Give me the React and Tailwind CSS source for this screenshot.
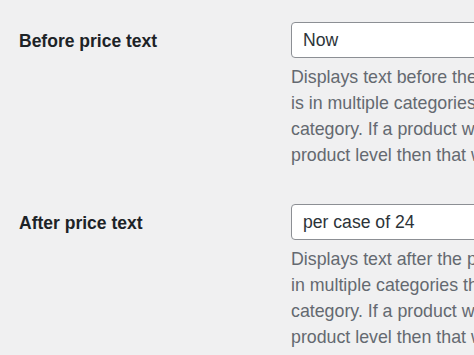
import React from 'react';

const FIELDS = [
  {
    label: 'Before price text',
    value: 'Now',
    help: [
      'Displays text before the price. If a product',
      'is in multiple categories then the first one',
      'category. If a product wide setting is set at',
      'product level then that will override this.',
    ],
  },
  {
    label: 'After price text',
    value: 'per case of 24',
    help: [
      'Displays text after the price. If a product is',
      'in multiple categories then the first one is',
      'category. If a product wide setting is set at',
      'product level then that will override this.',
    ],
  },
];

function FieldRow({ label, value, help }) {
  return (
    <div className="flex pl-[19px]">
      <div className="w-[272px] shrink-0 pt-[23px] text-[17.5px] leading-[36px] font-bold text-[#1d2327]">
        {label}
      </div>
      <div className="flex-1 min-w-0 pt-[22px]">
        <input
          type="text"
          defaultValue={value}
          className="block w-[400px] h-[36px] px-[11px] bg-white border border-[#8c8f94] rounded-[4px] text-[17.6px] text-[#2c3338] outline-none"
        />
        <div className="mt-[6px] text-[17.8px] leading-[26px] text-[#646970]">
          {help.map((line) => (
            <div key={line} className="whitespace-nowrap">{line}</div>
          ))}
        </div>
      </div>
    </div>
  );
}

export default function App() {
  return (
    <div
      className="w-full h-[355px] overflow-hidden bg-[#f0f0f1]"
      style={{ fontFamily: '"Liberation Sans", Arial, sans-serif' }}
    >
      <div className="flex flex-col gap-[14px]">
        {FIELDS.map((f) => (
          <FieldRow key={f.label} {...f} />
        ))}
      </div>
    </div>
  );
}
